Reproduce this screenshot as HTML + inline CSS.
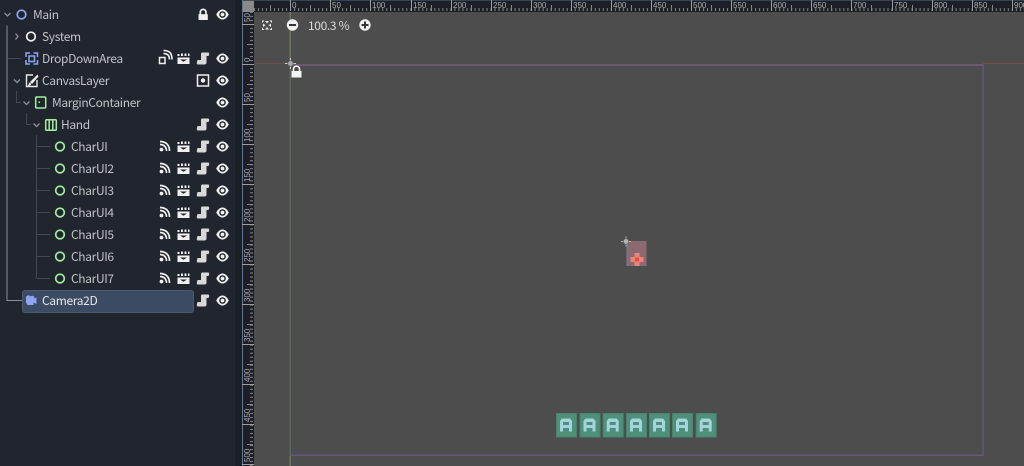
<!DOCTYPE html>
<html><head><meta charset="utf-8"><style>
html,body{margin:0;padding:0;background:#4d4d4d}
#p{position:relative;width:1024px;height:466px;overflow:hidden;background:#4d4d4d;font-family:"Noto Sans CJK JP","Liberation Sans",sans-serif}
.t{position:absolute;font-size:12px;line-height:22px;height:22px;color:#c0c2c6;white-space:nowrap;letter-spacing:-.35px}
svg{position:absolute;left:0;top:0}
</style></head><body><div id="p">
<div style="position:absolute;left:0;top:0;width:235px;height:466px;background:#21262e"></div>
<div style="position:absolute;left:235px;top:0;width:7px;height:466px;background:#1a1e25"></div>
<div style="position:absolute;left:22px;top:290px;width:170px;height:21px;background:#3a4b63;border:1px solid #4a5a72;border-radius:3px"></div>

<svg width="1024" height="466" viewBox="0 0 1024 466">
<defs>
<pattern id="hm" x="290" y="0" width="4.01" height="12" patternUnits="userSpaceOnUse"><rect x="0" y="8" width="1" height="3" fill="#85878a"/></pattern>
<pattern id="vm" x="242" y="64" width="12" height="4.01" patternUnits="userSpaceOnUse"><rect x="8" y="0" width="3" height="1" fill="#85878a"/></pattern>
<g id="eye"><path d="M-6.300 0C-4.300-3.800-2-5 0-5S4.300-3.800 6.300 0C4.300 3.800 2 5 0 5S-4.300 3.800-6.300 0Z" fill="#f0f0f0"/><circle r="3.300" fill="#21262e"/><circle r="1.900" fill="#f0f0f0"/></g>
<g id="scr"><path d="M-1-6H5C6-6 6.500-5 6-3.500L5.500-2.500H3.500V4C3.500 5.500 2.500 6 1.500 6H-5C-6 6-6.500 5-6 3.500L-5.500 1.500H-2V-4C-2-5.500-1.500-6-1-6Z" fill="#d8d8d8"/></g>
<g id="clap"><path d="M-6-1.500H6V5H-6Z" fill="#f0f0f0"/><path d="M-6-5H-4V-3H-6ZM-2.500-5.500H-.5V-3H-2.500ZM1-5.500H3V-3H1ZM4.500-5.500H6V-3H4.500Z" fill="#f0f0f0"/><path d="M-3.500 0.500H3.500L0 2.800Z" fill="#21262e"/></g>
<g id="sig"><circle cx="-3.500" cy="3.500" r="1.900" fill="#f0f0f0"/><path d="M-5-1.500C-1-1.500 1.500 1 1.500 5M-5-4.500C1-4.500 4.500-1 4.500 5" fill="none" stroke="#f0f0f0" stroke-width="1.700"/></g>
<g id="ci"><circle r="4.300" fill="none" stroke="#a5eda4" stroke-width="1.700"/></g>
<g id="card"><rect x=".5" y=".5" width="20" height="23.500" fill="#4f9178" stroke="#458472"/><path d="M4 18.500V8L6 5.500H14L16 8V18.500H13V15H7V18.500ZM7 9V12H13V9Z" fill="#a3d3dc" fill-rule="evenodd"/></g>
</defs>

<!-- tree lines -->
<path d="M7 25.500V300.500H22" fill="none" stroke="#8c8f93" stroke-width="1"/>
<path d="M8 58.500H21M16.500 91V102.500H21M26.500 113V124.500H31M36.500 135V278.500M37 146.500H50M37 168.500H50M37 190.500H50M37 212.500H50M37 234.500H50M37 256.500H50M37 278.500H50" fill="none" stroke="#444950" stroke-width="1"/>

<!-- folding arrows -->
<path d="M4.500 13L7.500 16L10.500 13" fill="none" stroke="#8f9196" stroke-width="1.300"/>
<path d="M15.500 33.500L18 36.500L15.500 39.500" fill="none" stroke="#8f9196" stroke-width="1.300"/>
<path d="M14 79.500L17 82.500L20 79.500" fill="none" stroke="#8f9196" stroke-width="1.300"/>
<path d="M23.500 101.500L26.500 104.500L29.500 101.500" fill="none" stroke="#8f9196" stroke-width="1.300"/>
<path d="M33.500 123.500L36.500 126.500L39.500 123.500" fill="none" stroke="#8f9196" stroke-width="1.300"/>

<!-- node icons -->
<circle cx="21.500" cy="14.500" r="4.300" fill="none" stroke="#8da5f3" stroke-width="1.700"/>
<circle cx="31" cy="36.500" r="4.300" fill="none" stroke="#f0f0f0" stroke-width="1.700"/>
<path d="M26 57V53H30M33.500 53H37.500V57M37.500 60V64H33.500M30 64H26V60" fill="none" stroke="#8da5f3" stroke-width="1.500"/>
<rect x="29" y="56" width="5.500" height="5.500" fill="none" stroke="#8da5f3" stroke-width="1.500"/>
<path d="M33 75H26.500V86.500H37V80" fill="none" stroke="#e8e8e8" stroke-width="1.400"/>
<path d="M37.500 74.500L30 82L32 84L38.500 76.500Z M27.500 86C29.500 86 31.500 85.500 31 83.500L29.500 82.500C28.500 83 29 85 27.500 86Z" fill="#f0f0f0"/>
<rect x="35.700" y="97" width="10" height="11" rx="1" fill="none" stroke="#a5eda4" stroke-width="1.500"/>
<rect x="38.500" y="101.500" width="1.500" height="1.500" fill="#a5eda4"/>
<rect x="45.700" y="119.700" width="10.600" height="10.600" rx="1" fill="none" stroke="#a5eda4" stroke-width="1.500"/>
<path d="M49.200 120V130M52.800 120V130" stroke="#a5eda4" stroke-width="1.500"/>
<use href="#ci" x="60" y="146.500"/><use href="#ci" x="60" y="168.500"/><use href="#ci" x="60" y="190.500"/><use href="#ci" x="60" y="212.500"/><use href="#ci" x="60" y="234.500"/><use href="#ci" x="60" y="256.500"/><use href="#ci" x="60" y="278.500"/>
<circle cx="28.500" cy="297.800" r="2.600" fill="#8da5f3"/><circle cx="32.300" cy="298" r="2.200" fill="#8da5f3"/>
<path d="M26 299H33.500L36.500 297.500V304L33.500 302.500V305H27.500L26 302.500Z" fill="#8da5f3"/>

<!-- right icons -->
<path d="M198.500 14.200H207.800V20H198.500Z" fill="#f0f0f0"/><path d="M200.300 14.500V12.500C200.300 8.300 206 8.300 206 12.500V14.500" fill="none" stroke="#f0f0f0" stroke-width="1.700"/>
<use href="#eye" x="222.500" y="14.500"/>
<use href="#eye" x="222.500" y="58.500"/><use href="#eye" x="222.500" y="80.500"/><use href="#eye" x="222.500" y="102.500"/><use href="#eye" x="222.500" y="124.500"/><use href="#eye" x="222.500" y="146.500"/><use href="#eye" x="222.500" y="168.500"/><use href="#eye" x="222.500" y="190.500"/><use href="#eye" x="222.500" y="212.500"/><use href="#eye" x="222.500" y="234.500"/><use href="#eye" x="222.500" y="256.500"/><use href="#eye" x="222.500" y="278.500"/><use href="#eye" x="222.500" y="300.500"/>
<use href="#scr" x="203" y="58.500"/><use href="#scr" x="203" y="124.500"/><use href="#scr" x="203" y="146.500"/><use href="#scr" x="203" y="168.500"/><use href="#scr" x="203" y="190.500"/><use href="#scr" x="203" y="212.500"/><use href="#scr" x="203" y="234.500"/><use href="#scr" x="203" y="256.500"/><use href="#scr" x="203" y="278.500"/><use href="#scr" x="203" y="300.500"/>
<use href="#clap" x="183.500" y="59"/><use href="#clap" x="183.500" y="147"/><use href="#clap" x="183.500" y="169"/><use href="#clap" x="183.500" y="191"/><use href="#clap" x="183.500" y="213"/><use href="#clap" x="183.500" y="235"/><use href="#clap" x="183.500" y="257"/><use href="#clap" x="183.500" y="279"/>
<use href="#sig" x="165" y="146"/><use href="#sig" x="165" y="168"/><use href="#sig" x="165" y="190"/><use href="#sig" x="165" y="212"/><use href="#sig" x="165" y="234"/><use href="#sig" x="165" y="256"/><use href="#sig" x="165" y="278"/>
<path d="M163.500 53.500C167.500 53.500 169.500 55.500 169.500 59.500M163.500 50.500C169.500 50.500 172 53 172 59.500" fill="none" stroke="#f0f0f0" stroke-width="1.600"/>
<rect x="159.500" y="57.500" width="5.500" height="6" fill="none" stroke="#f0f0f0" stroke-width="1.500"/>
<rect x="197.500" y="75" width="11" height="11" fill="#21262e" stroke="#f0f0f0" stroke-width="1.500"/><circle cx="203" cy="80.500" r="2.200" fill="#f0f0f0"/>

<!-- rulers -->
<rect x="254" y="0" width="770" height="12" fill="#1c1f25"/>
<rect x="242" y="12" width="12" height="454" fill="#1c1f25"/>
<rect x="254" y="0" width="770" height="1" fill="#34435a"/>
<rect x="242" y="0" width="1" height="466" fill="#4f7cae"/>
<rect x="254" y="0" width="770" height="12" fill="url(#hm)"/>
<rect x="242" y="12" width="12" height="454" fill="url(#vm)"/>
<path d="M290 0V11M330 0V11M370 0V11M411 0V11M451 0V11M491 0V11M531 0V11M571 0V11M611 0V11M651 0V11M691 0V11M731 0V11M771 0V11M811 0V11M851 0V11M892 0V11M932 0V11M972 0V11M1012 0V11" stroke="#9a9ca0" stroke-width="1" transform="translate(.5 0)"/>
<path d="M270 5V11M310 5V11M350 5V11M390 5V11M431 5V11M471 5V11M511 5V11M551 5V11M591 5V11M631 5V11M671 5V11M711 5V11M751 5V11M791 5V11M831 5V11M871 5V11M912 5V11M952 5V11M992 5V11" stroke="#85878a" stroke-width="1" transform="translate(.5 0)"/>
<path d="M242 24H254M242 64H254M242 104H254M242 144H254M242 184H254M242 224H254M242 264H254M242 304H254M242 344H254M242 384H254M242 424H254M242 464H254" stroke="#9a9ca0" stroke-width="1" transform="translate(0 .5)"/>
<path d="M247 44H253M247 84H253M247 124H253M247 164H253M247 204H253M247 244H253M247 284H253M247 324H253M247 364H253M247 404H253M247 444H253" stroke="#85878a" stroke-width="1" transform="translate(0 .5)"/>
<rect x="243" y="1" width="11" height="11" fill="#8a8a8a"/>
<g font-family="'Liberation Sans',sans-serif" font-size="8" fill="#a9abae">
<text x="292" y="8">0</text><text x="332" y="8">50</text><text x="372" y="8">100</text><text x="413" y="8">150</text><text x="453" y="8">200</text><text x="493" y="8">250</text><text x="533" y="8">300</text><text x="573" y="8">350</text><text x="613" y="8">400</text><text x="653" y="8">450</text><text x="693" y="8">500</text><text x="733" y="8">550</text><text x="773" y="8">600</text><text x="813" y="8">650</text><text x="853" y="8">700</text><text x="894" y="8">750</text><text x="934" y="8">800</text><text x="974" y="8">850</text><text x="1014" y="8">900</text>
<text transform="translate(250 22) rotate(-90)">50</text>
<text transform="translate(250 62) rotate(-90)">0</text>
<text transform="translate(250 102) rotate(-90)">50</text>
<text transform="translate(250 142) rotate(-90)">100</text>
<text transform="translate(250 182) rotate(-90)">150</text>
<text transform="translate(250 222) rotate(-90)">200</text>
<text transform="translate(250 262) rotate(-90)">250</text>
<text transform="translate(250 302) rotate(-90)">300</text>
<text transform="translate(250 342) rotate(-90)">350</text>
<text transform="translate(250 382) rotate(-90)">400</text>
<text transform="translate(250 422) rotate(-90)">450</text>
<text transform="translate(250 462) rotate(-90)">500</text>
</g>

<!-- viewport axes and frame -->
<rect x="254" y="63" width="36" height="1" fill="#6d4d4d"/>
<rect x="983" y="63" width="41" height="1" fill="#7a4e4e"/>
<rect x="289.500" y="12" width="1.500" height="52" fill="#677a55"/>
<rect x="289.500" y="456" width="1.500" height="10" fill="#677a55"/>
<rect x="289.500" y="65" width="1.500" height="391" fill="#5d665a"/>
<rect x="291" y="64" width="692.500" height="2" fill="#6a5873"/>
<rect x="982.300" y="65" width="1.500" height="391" fill="#5f5873"/>
<rect x="291" y="454.500" width="692" height="1.500" fill="#65587a"/>

<!-- zoom toolbar -->
<path d="M262 20.500H264.500L262 23ZM272 20.500H269.500L272 23ZM262 30H264.500L262 27.500ZM272 30H269.500L272 27.500Z" fill="#eee"/>
<path d="M265 21H269L267 23.500ZM265 29.500H269L267 27ZM263 23.500V27L265.500 25.200ZM271 23.500V27L268.500 25.200Z" fill="#eee"/>
<circle cx="292.500" cy="25" r="5.700" fill="#f0f0f0"/><rect x="289" y="24" width="7" height="2" fill="#333"/>
<circle cx="365" cy="25" r="5.700" fill="#f0f0f0"/><path d="M361.500 25H368.500M365 21.500V28.500" stroke="#333" stroke-width="2"/>

<!-- origin gizmo and lock -->
<path d="M285 63.500H296M290.500 58V69" stroke="#cfcfcf" stroke-width="1"/>
<circle cx="290.500" cy="63.500" r="2.800" fill="#a8a8a8" stroke="#555" stroke-width=".6"/>
<rect x="291.500" y="71" width="10" height="6.500" fill="#f4f4f4"/><path d="M293.500 71V69C293.500 65.200 299.500 65.200 299.500 69V71" fill="none" stroke="#f4f4f4" stroke-width="1.600"/>

<!-- centre card -->
<rect x="626.500" y="241" width="20" height="25" fill="#8d6a71"/>
<rect x="626.500" y="241" width="1" height="25" fill="#74809a"/>
<rect x="634.500" y="253" width="5" height="13" fill="#e8867c"/><rect x="630.500" y="257" width="13" height="5" fill="#e8867c"/><rect x="635" y="257.500" width="4" height="4" fill="#f0493f"/>
<path d="M621 241.500H631M626 236.500V246.500" stroke="#cfcfcf" stroke-width=".8"/>
<circle cx="626" cy="241.500" r="2.800" fill="#b2b2b2" stroke="#555" stroke-width=".6"/>

<!-- hand cards -->
<use href="#card" x="556" y="413"/><use href="#card" x="579.500" y="413"/><use href="#card" x="602.700" y="413"/><use href="#card" x="626" y="413"/><use href="#card" x="649" y="413"/><use href="#card" x="672" y="413"/><use href="#card" x="695.700" y="413"/>
</svg>

<div class="t" style="left:33px;top:4px">Main</div>
<div class="t" style="left:42px;top:26px">System</div>
<div class="t" style="left:42px;top:48px">DropDownArea</div>
<div class="t" style="left:42px;top:70px">CanvasLayer</div>
<div class="t" style="left:52px;top:92px">MarginContainer</div>
<div class="t" style="left:61px;top:114px">Hand</div>
<div class="t" style="left:71px;top:136px">CharUI</div>
<div class="t" style="left:71px;top:158px">CharUI2</div>
<div class="t" style="left:71px;top:180px">CharUI3</div>
<div class="t" style="left:71px;top:202px">CharUI4</div>
<div class="t" style="left:71px;top:224px">CharUI5</div>
<div class="t" style="left:71px;top:246px">CharUI6</div>
<div class="t" style="left:71px;top:268px">CharUI7</div>
<div class="t" style="left:42px;top:290px;color:#e4e6e8">Camera2D</div>
<div class="t" style="left:308px;top:15px;color:#dcdcdc">100.3 %</div>
</div></body></html>
